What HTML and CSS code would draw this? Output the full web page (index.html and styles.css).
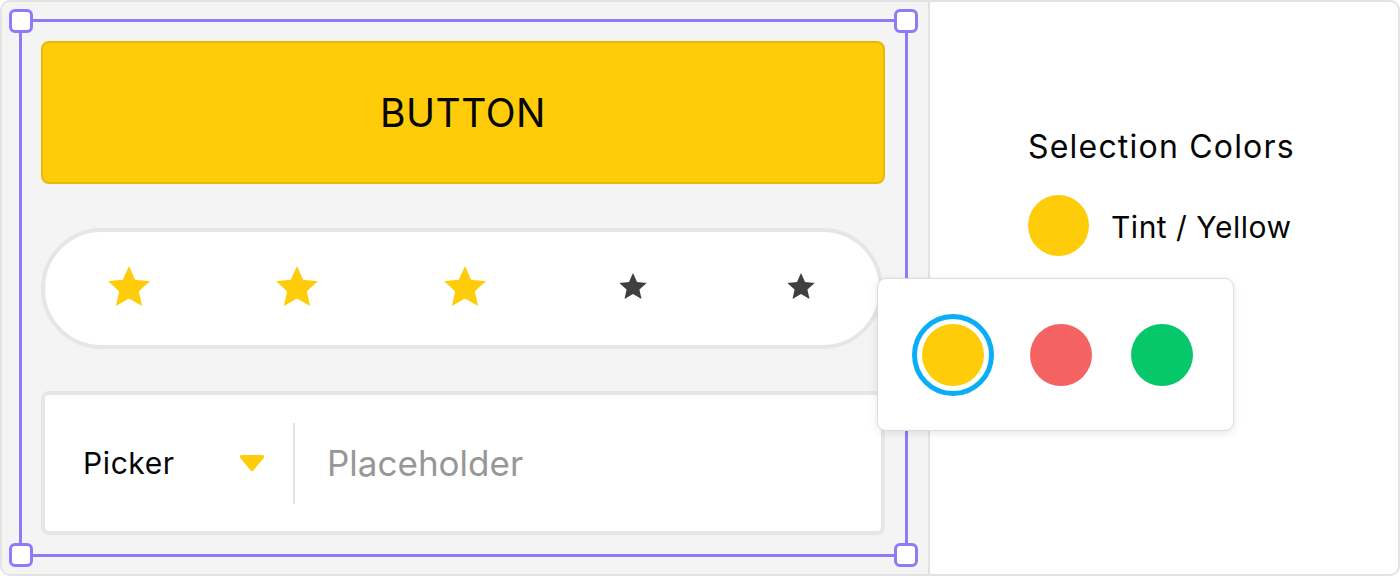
FILE: index.html
```html
<!DOCTYPE html>
<html>
<head>
<meta charset="utf-8">
<link rel="stylesheet" href="styles.css">
</head>
<body>
<div class="frame">
  <div class="canvas">
    <div class="btn">BUTTON</div>
    <div class="rating">
      <div class="cell"><svg class="star big" viewBox="2 2 20 19"><path d="M12 2l2.94 6.56 7.06.72-5.3 4.76 1.52 6.96L12 17.4l-6.22 3.6 1.52-6.96L2 9.28l7.06-.72z"/></svg></div>
      <div class="cell"><svg class="star big" viewBox="2 2 20 19"><path d="M12 2l2.94 6.56 7.06.72-5.3 4.76 1.52 6.96L12 17.4l-6.22 3.6 1.52-6.96L2 9.28l7.06-.72z"/></svg></div>
      <div class="cell"><svg class="star big" viewBox="2 2 20 19"><path d="M12 2l2.94 6.56 7.06.72-5.3 4.76 1.52 6.96L12 17.4l-6.22 3.6 1.52-6.96L2 9.28l7.06-.72z"/></svg></div>
      <div class="cell"><svg class="star small" viewBox="2 2 20 19"><path d="M12 2l2.94 6.56 7.06.72-5.3 4.76 1.52 6.96L12 17.4l-6.22 3.6 1.52-6.96L2 9.28l7.06-.72z"/></svg></div>
      <div class="cell"><svg class="star small" viewBox="2 2 20 19"><path d="M12 2l2.94 6.56 7.06.72-5.3 4.76 1.52 6.96L12 17.4l-6.22 3.6 1.52-6.96L2 9.28l7.06-.72z"/></svg></div>
    </div>
    <div class="picker">
      <span class="picker-label">Picker</span>
      <svg class="caret" viewBox="0 0 26 18"><path d="M3 1h20c2 0 2.8 1.4 1.7 3L14.6 16.2c-.8 1-2.4 1-3.2 0L1.3 4C.2 2.4 1 1 3 1z"/></svg>
      <span class="divider"></span>
      <span class="placeholder">Placeholder</span>
    </div>

    <div class="selection">
      <span class="handle tl"></span>
      <span class="handle tr"></span>
      <span class="handle bl"></span>
      <span class="handle br"></span>
    </div>
  </div>
  <div class="side">
    <div class="side-title">Selection Colors</div>
    <div class="swatch-row">
      <span class="swatch"></span>
      <span class="swatch-label">Tint / Yellow</span>
    </div>
  </div>
  <div class="popover">
    <span class="ring"><span class="dot yellow"></span></span>
    <span class="dot red"></span>
    <span class="dot green"></span>
  </div>
</div>
</body>
</html>
```

FILE: styles.css
```css
* { box-sizing: border-box; }
html, body { margin: 0; padding: 0; background: #ffffff; }
body { font-family: Inter, "Noto Sans", sans-serif; }

.frame {
  position: relative;
  width: 1400px;
  height: 576px;
  border: 2px solid #e3e3e3;
  border-radius: 10px;
  overflow: hidden;
  display: flex;
  background: #ffffff;
}

.canvas {
  position: relative;
  width: 928px;
  flex: none;
  background: #f4f4f4;
  border-right: 2px solid #e3e3e3;
  padding: 39px 0 0 39px;
  display: flex;
  flex-direction: column;
}

.btn {
  width: 844px;
  height: 143px;
  background: #fecc09;
  border: 2px solid #e8b905;
  border-radius: 8px;
  display: flex;
  align-items: center;
  justify-content: center;
  font-size: 39px;
  color: #050505;
  letter-spacing: 0.5px;
}

.rating {
  margin-top: 44px;
  width: 842px;
  height: 121px;
  background: #ffffff;
  border: 4px solid #e6e6e6;
  border-radius: 61px;
  display: grid;
  grid-template-columns: repeat(5, 168px);
  align-items: center;
  padding: 0 0 6px 0;
}
.cell { display: flex; justify-content: center; align-items: center; }
.star { display: block; }
.star.big { width: 42px; height: 40px; fill: #fecc09; }
.star.small { width: 28px; height: 26px; fill: #3f3f3f; }

.picker {
  margin-top: 42px;
  width: 844px;
  height: 144px;
  background: #ffffff;
  border: 4px solid #e6e6e6;
  border-radius: 8px;
  display: flex;
  align-items: center;
  padding-left: 38px;
}
.picker-label {
  width: 156px;
  font-size: 30px;
  letter-spacing: 0.6px;
  color: #050505;
}
.caret { width: 26px; height: 18px; fill: #fecc09; display: block; }
.divider {
  width: 2px;
  height: 81px;
  background: #e3e3e3;
  margin-left: 28px;
}
.placeholder {
  margin-left: 32px;
  font-size: 35px;
  color: #979797;
}

.selection {
  position: absolute;
  left: 17px;
  top: 17px;
  width: 889px;
  height: 538px;
  border: 3px solid #8c7cf7;
  pointer-events: none;
}
.handle {
  position: absolute;
  width: 24px;
  height: 24px;
  background: #ffffff;
  border: 3px solid #8c7cf7;
  border-radius: 6px;
}
.handle.tl { left: -13px; top: -13px; }
.handle.tr { right: -13px; top: -13px; }
.handle.bl { left: -13px; bottom: -13px; }
.handle.br { right: -13px; bottom: -13px; }

.side {
  flex: 1;
  padding: 126px 0 0 98px;
  display: flex;
  flex-direction: column;
}
.side-title {
  font-size: 32px;
  line-height: 38px;
  letter-spacing: 1.2px;
  color: #050505;
}
.swatch-row {
  margin-top: 29px;
  display: flex;
  align-items: center;
  gap: 22px;
}
.swatch {
  width: 61px;
  height: 61px;
  border-radius: 50%;
  background: #fecc09;
}
.swatch-label {
  font-size: 30px;
  letter-spacing: 0.5px;
  color: #050505;
  padding-top: 3px;
}

.popover {
  position: absolute;
  left: 875px;
  top: 276px;
  width: 357px;
  height: 153px;
  background: #ffffff;
  border: 1px solid #dcdcdc;
  border-radius: 9px;
  box-shadow: 0 2px 8px rgba(0, 0, 0, 0.10);
  display: flex;
  align-items: center;
  padding-left: 34px;
  gap: 36px;
}
.ring {
  width: 82px;
  height: 82px;
  border-radius: 50%;
  border: 5px solid #0aaef5;
  display: flex;
  align-items: center;
  justify-content: center;
}
.dot {
  width: 62px;
  height: 62px;
  border-radius: 50%;
  display: block;
}
.dot.yellow { background: #fecc09; }
.dot.red { background: #f46262; }
.dot.green { background: #06c86a; margin-left: 3px; }
```
